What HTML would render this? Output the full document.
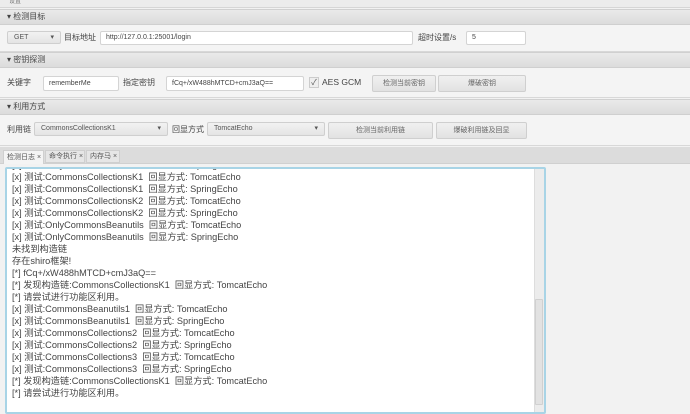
<!DOCTYPE html>
<html><head><meta charset="utf-8"><style>
*{box-sizing:border-box;margin:0;padding:0}
body{width:690px;height:414px;overflow:hidden;background:#f2f2f2;font-family:"Liberation Sans","Noto Sans CJK SC",sans-serif;font-size:8px;color:#333;position:relative}
.a{position:absolute;white-space:nowrap}
.hdr{position:absolute;left:0;width:690px;height:16px;background:linear-gradient(#eaeaea,#dcdcdc);border-top:1px solid #d0d0d0;border-bottom:1px solid #cfcfcf;font-size:8px;line-height:14px;padding-left:7px;color:#444}
.row{position:absolute;left:0;width:690px;background:#f4f4f4;border-bottom:1px solid #d8d8d8}
.inp{position:absolute;background:#fff;border:1px solid #d4d4d4;border-radius:2px;font-size:7px;padding-left:5px;color:#444}
.cb{position:absolute;background:linear-gradient(#f2f2f2,#e4e4e4);border:1px solid #cfcfcf;border-radius:2px;font-size:7px;line-height:12px;padding-left:6px;color:#555}
.cb:after{content:"▾";position:absolute;right:6px;top:0;font-size:7px;color:#555}
.btn{position:absolute;background:linear-gradient(#f0f0f0,#e2e2e2);border:1px solid #cfcfcf;border-radius:2px;font-size:7px;text-align:center;color:#666}
.lbl{position:absolute;font-size:8px;line-height:14px;color:#444;white-space:nowrap}
.log{position:absolute;left:12px;top:159px;font-size:9.2px;line-height:12px;color:#444;white-space:pre;height:253px;overflow:hidden}
</style></head><body>
<div class="a" style="left:0;top:0;width:690px;height:8px;background:#ececec;border-bottom:1px solid #d6d6d6;font-size:6px;line-height:4px;padding-left:9px;color:#777">设置</div>

<div class="hdr" style="top:9px">▾ 检测目标</div>
<div class="row" style="top:25px;height:27px"></div>
<div class="cb" style="left:7px;top:31px;width:54px;height:13px">GET</div>
<div class="lbl" style="left:64px;top:31px">目标地址</div>
<div class="inp" style="left:100px;top:31px;width:313px;height:14px;line-height:12px">http://127.0.0.1:25001/login</div>
<div class="lbl" style="left:418px;top:31px">超时设置/s</div>
<div class="inp" style="left:466px;top:31px;width:60px;height:14px;line-height:12px">5</div>

<div class="hdr" style="top:52px">▾ 密钥探测</div>
<div class="row" style="top:68px;height:30px"></div>
<div class="lbl" style="left:7px;top:76px">关键字</div>
<div class="inp" style="left:43px;top:76px;width:76px;height:15px;line-height:13px">rememberMe</div>
<div class="lbl" style="left:123px;top:76px">指定密钥</div>
<div class="inp" style="left:166px;top:76px;width:138px;height:15px;line-height:13px">fCq+/xW488hMTCD+cmJ3aQ==</div>
<div class="a" style="left:309px;top:77px;width:10px;height:11px;background:#eee;border:1px solid #ccc;font-size:8px;line-height:9px;text-align:center;color:#555">✓</div>
<div class="lbl" style="left:322px;top:75px;font-size:8.5px">AES GCM</div>
<div class="btn" style="left:372px;top:75px;width:64px;height:17px;line-height:15px">检测当前密钥</div>
<div class="btn" style="left:438px;top:75px;width:88px;height:17px;line-height:15px">爆破密钥</div>

<div class="hdr" style="top:99px">▾ 利用方式</div>
<div class="row" style="top:115px;height:31px"></div>
<div class="lbl" style="left:7px;top:123px">利用链</div>
<div class="cb" style="left:34px;top:122px;width:134px;height:14px">CommonsCollectionsK1</div>
<div class="lbl" style="left:172px;top:123px">回显方式</div>
<div class="cb" style="left:207px;top:122px;width:118px;height:14px">TomcatEcho</div>
<div class="btn" style="left:328px;top:122px;width:105px;height:17px;line-height:15px">检测当前利用链</div>
<div class="btn" style="left:436px;top:122px;width:91px;height:17px;line-height:15px">爆破利用链及回显</div>

<div class="a" style="left:0;top:147px;width:690px;height:17px;background:#dcdcdc;border-bottom:1px solid #d0d0d0"></div>
<div class="a" style="left:3px;top:150px;width:41px;height:14px;background:#f4f4f4;border:1px solid #cfcfcf;border-bottom:none;font-size:7px;line-height:13px;padding-left:3px;color:#555">检测日志 ×</div>
<div class="a" style="left:45px;top:150px;width:40px;height:13px;background:#e6e6e6;border:1px solid #cfcfcf;font-size:7px;line-height:12px;padding-left:3px;color:#555">命令执行 ×</div>
<div class="a" style="left:86px;top:150px;width:34px;height:13px;background:#e6e6e6;border:1px solid #cfcfcf;font-size:7px;line-height:12px;padding-left:3px;color:#555">内存马 ×</div>

<div class="a" style="left:5px;top:167px;width:541px;height:247px;background:#fff;border:2px solid #a8d4e6;border-radius:2px;overflow:hidden">
<div class="a" style="right:0;top:0;width:10px;height:245px;background:#ececec;border-left:1px solid #ddd"></div>
<div class="a" style="right:1px;top:130px;width:8px;height:106px;background:#e2e2e2;border:1px solid #d0d0d0;border-radius:1px"></div>
</div>
<div class="a" style="left:7px;top:169px;width:527px;height:243px;overflow:hidden">
<div class="log" style="left:5px;top:-10px">[x] 测试:OnlyCommonsBeanutils  回显方式: SpringEcho
[x] 测试:CommonsCollectionsK1  回显方式: TomcatEcho
[x] 测试:CommonsCollectionsK1  回显方式: SpringEcho
[x] 测试:CommonsCollectionsK2  回显方式: TomcatEcho
[x] 测试:CommonsCollectionsK2  回显方式: SpringEcho
[x] 测试:OnlyCommonsBeanutils  回显方式: TomcatEcho
[x] 测试:OnlyCommonsBeanutils  回显方式: SpringEcho
未找到构造链
存在shiro框架!
[*] fCq+/xW488hMTCD+cmJ3aQ==
[*] 发现构造链:CommonsCollectionsK1  回显方式: TomcatEcho
[*] 请尝试进行功能区利用。
[x] 测试:CommonsBeanutils1  回显方式: TomcatEcho
[x] 测试:CommonsBeanutils1  回显方式: SpringEcho
[x] 测试:CommonsCollections2  回显方式: TomcatEcho
[x] 测试:CommonsCollections2  回显方式: SpringEcho
[x] 测试:CommonsCollections3  回显方式: TomcatEcho
[x] 测试:CommonsCollections3  回显方式: SpringEcho
[*] 发现构造链:CommonsCollectionsK1  回显方式: TomcatEcho
[*] 请尝试进行功能区利用。</div>
</div>
</body></html>
